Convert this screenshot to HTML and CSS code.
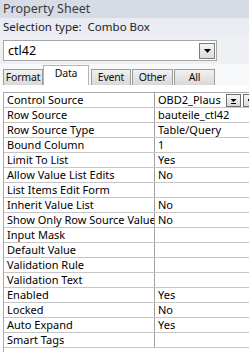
FILE: index.html
```html
<!DOCTYPE html>
<html>
<head>
<meta charset="utf-8">
<link rel="stylesheet" href="styles.css">
</head>
<body>
<div class="sheet">
  <div class="title">Property Sheet</div>
  <div class="seltype">Selection type:&nbsp; Combo Box</div>
  <div class="combo-area">
    <div class="combo">
      <span class="combo-text">ctl42</span>
      <span class="combo-btn"><svg width="7" height="4" viewBox="0 0 7 4"><path d="M0 0H7L3.5 4Z" fill="#000"/></svg></span>
    </div>
  </div>
  <div class="tabs">
    <div class="tab t-format">Format</div>
    <div class="tab active t-data">Data</div>
    <div class="tab t-event">Event</div>
    <div class="tab t-other">Other</div>
    <div class="tab t-all">All</div>
  </div>
  <div class="grid">
    <div class="row"><div class="k">Control Source</div><div class="v"><span class="vt">OBD2_Plaus</span><span class="cbtn"><svg width="7" height="7" viewBox="0 0 7 7"><path d="M0.5 2H6.5L3.5 5Z" fill="#000"/><rect x="1" y="6" width="5" height="1" fill="#000"/></svg></span><span class="cbtn b2"><svg width="6" height="2" viewBox="0 0 6 2"><rect x="0" y="0" width="6" height="2" fill="#000"/></svg></span></div></div>
    <div class="row"><div class="k">Row Source</div><div class="v">bauteile_ctl42</div></div>
    <div class="row"><div class="k">Row Source Type</div><div class="v">Table/Query</div></div>
    <div class="row"><div class="k">Bound Column</div><div class="v">1</div></div>
    <div class="row"><div class="k">Limit To List</div><div class="v">Yes</div></div>
    <div class="row"><div class="k">Allow Value List Edits</div><div class="v">No</div></div>
    <div class="row"><div class="k">List Items Edit Form</div><div class="v"></div></div>
    <div class="row"><div class="k">Inherit Value List</div><div class="v">No</div></div>
    <div class="row"><div class="k"><span class="clip">Show Only Row Source Values</span></div><div class="v">No</div></div>
    <div class="row"><div class="k">Input Mask</div><div class="v"></div></div>
    <div class="row"><div class="k">Default Value</div><div class="v"></div></div>
    <div class="row"><div class="k">Validation Rule</div><div class="v"></div></div>
    <div class="row"><div class="k">Validation Text</div><div class="v"></div></div>
    <div class="row"><div class="k">Enabled</div><div class="v">Yes</div></div>
    <div class="row"><div class="k">Locked</div><div class="v">No</div></div>
    <div class="row"><div class="k">Auto Expand</div><div class="v">Yes</div></div>
    <div class="row"><div class="k">Smart Tags</div><div class="v"></div></div>
  </div>
</div>
</body>
</html>
```
FILE: styles.css
```css
html, body {
  margin: 0;
  padding: 0;
  background: #ffffff;
  overflow: hidden;
}
body {
  width: 249px;
  height: 352px;
  font-family: "Noto Sans", "Open Sans", sans-serif;
  font-size: 11px;
  color: #000;
}
.sheet {
  width: 249px;
  height: 352px;
  overflow: hidden;
  background: #ffffff;
}
.title {
  height: 18px;
  line-height: 17px;
  background: #d6dbe6;
  color: #3c3c3c;
  font-size: 12.5px;
  padding-left: 3px;
}
.seltype {
  height: 18px;
  line-height: 17px;
  background: #e9ecf2;
  color: #222;
  font-size: 11.5px;
  padding-left: 3px;
}
.combo-area {
  background: #eef0f4;
  padding: 4px 0 3px 3px;
  height: 21px;
}
.combo {
  width: 212px;
  height: 19px;
  border: 1px solid #a7a7a7;
  background: #fff;
  display: flex;
  align-items: center;
  justify-content: space-between;
}
.combo-text {
  padding-left: 4px;
  font-size: 12.5px;
  line-height: 19px;
}
.combo-btn {
  width: 14px;
  height: 14px;
  margin-right: 1px;
  border: 1px solid #7d7d7d;
  background: linear-gradient(#f5f5f5, #dcdcdc);
  display: flex;
  align-items: center;
  justify-content: center;
}
.tabs {
  height: 21px;
  display: flex;
  align-items: flex-end;
  padding-left: 3px;
  background: #f7f8fa;
}
.tab {
  box-sizing: border-box;
  height: 16px;
  line-height: 14px;
  border: 1px solid #9c9c9c;
  border-bottom: none;
  background: linear-gradient(#f0f0f0, #d9d9d9);
  text-align: center;
  font-size: 10.5px;
  letter-spacing: -0.2px;
  color: #111;
  margin-right: 1px;
  white-space: nowrap;
}
.tab.active {
  height: 20px;
  line-height: 15px;
  background: #fff;
  border-color: #b4b4b4;
  margin-right: 2px;
}
.t-format { width: 40px; margin-right: 0; }
.t-data { width: 46px; }
.t-event { width: 40px; }
.t-other { width: 41px; }
.t-all { width: 41px; }
.grid {
  margin-top: 7px;
  margin-left: 3px;
  width: 250px;
  padding-bottom: 6px;
  border-top: 1px solid #a9a9a9;
  border-left: 1px solid #a9a9a9;
  background: #fff;
}
.row {
  display: flex;
  height: 15px;
  box-sizing: border-box;
  border-bottom: 1px solid #c6c6c6;
}
.k {
  width: 151px;
  flex: none;
  padding-left: 3px;
  box-sizing: border-box;
  border-right: 1px solid #a0a0a0;
  white-space: nowrap;
  overflow: hidden;
  line-height: 14px;
}
.clip {
  display: block;
  width: 147px;
  overflow: hidden;
}
.v {
  flex: 1;
  padding-left: 3px;
  line-height: 14px;
  display: flex;
  align-items: center;
  white-space: nowrap;
}
.vt { width: 66px; }
.cbtn {
  width: 13px;
  height: 11px;
  border: 1px solid #6e6e6e;
  background: linear-gradient(#f7f7f7, #d8d8d8);
  display: flex;
  align-items: center;
  justify-content: center;
  margin-left: 2px;
}
.cbtn.b2 { margin-left: 2px; }
```
